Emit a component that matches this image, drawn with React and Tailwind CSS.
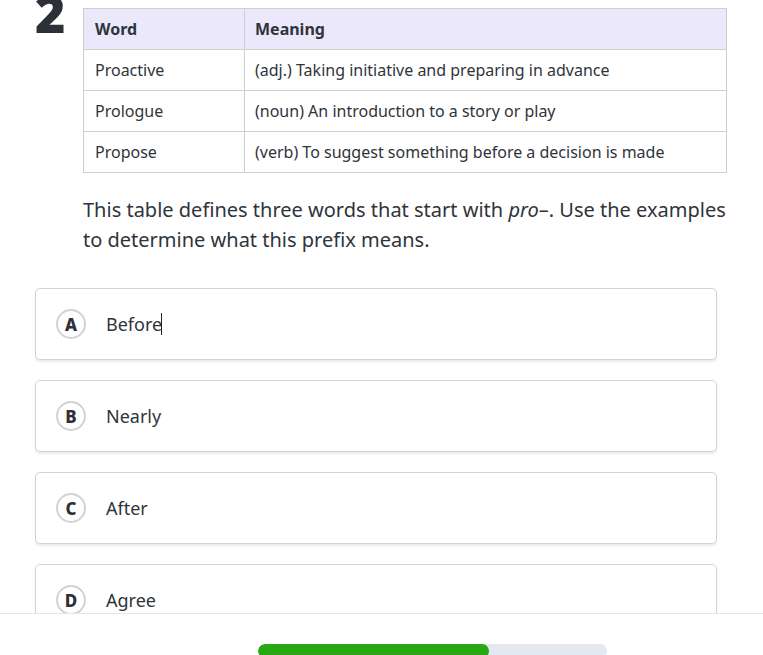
import React from "react";

const rows = [
  ["Proactive", "(adj.) Taking initiative and preparing in advance"],
  ["Prologue", "(noun) An introduction to a story or play"],
  ["Propose", "(verb) To suggest something before a decision is made"],
];

const options = [
  { letter: "A", text: "Before", caret: true },
  { letter: "B", text: "Nearly" },
  { letter: "C", text: "After" },
  { letter: "D", text: "Agree" },
];

const OptionCard = ({ letter, text, caret }) => (
  <div className="flex items-center h-[72px] border border-[#d4d4d4] rounded-[5px] bg-white shadow-[0_2px_2px_rgba(0,0,0,0.08)] pl-[20px]">
    <span className="flex items-center justify-center w-[30px] h-[30px] rounded-full border-2 border-[#d2d2d2] text-[17px] font-extrabold text-[#2b3136] pt-[2px]">
      {letter}
    </span>
    <span className="ml-[20px] text-[18px] text-[#2f343a] flex items-center">
      {text}
      {caret && <span className="inline-block w-px h-[22px] bg-[#222] ml-[-1px]" />}
    </span>
  </div>
);

export default function App() {
  return (
    <div
      className="relative h-[655px] w-[763px] overflow-hidden bg-white text-[#2f343a]"
      style={{ fontFamily: "'Noto Sans', sans-serif" }}
    >
      <div className="pl-[35px] w-[717px]">
        <div className="flex">
          <div className="w-[48px] shrink-0 mt-[-13px] text-[52px] leading-[52px] font-black text-[#2b3136]">
            2
          </div>
          <div className="pt-[8px] shrink-0">
            <table className="w-[644px] border-collapse text-[16px]">
              <thead>
                <tr className="bg-[#eae8fa] h-[41px]">
                  <th className="border border-[#cfcfcf] text-left font-bold pl-[11px] w-[161px]">Word</th>
                  <th className="border border-[#cfcfcf] text-left font-bold pl-[10px]">Meaning</th>
                </tr>
              </thead>
              <tbody>
                {rows.map(([w, m]) => (
                  <tr key={w} className="h-[41px]">
                    <td className="border border-[#cfcfcf] pl-[11px]">{w}</td>
                    <td className="border border-[#cfcfcf] pl-[10px]">{m}</td>
                  </tr>
                ))}
              </tbody>
            </table>
            <p className="mt-[22px] text-[20px] leading-[30px] w-[648px]">
              This table defines three words that start with <i>pro</i>–. Use the examples
              to determine what this prefix means.
            </p>
          </div>
        </div>
        <div className="mt-[33px] flex flex-col gap-[20px]">
          {options.map((o) => (
            <OptionCard key={o.letter} {...o} />
          ))}
        </div>
      </div>
      <div className="absolute left-0 right-0 bottom-0 h-[42px] bg-white border-t border-[#e3e6ec]">
        <div className="ml-[258px] mt-[30px] w-[349px] h-[14px] rounded-full bg-[#e4e8f0] overflow-hidden">
          <div className="h-full w-[231px] rounded-full bg-[#28a914]" />
        </div>
      </div>
    </div>
  );
}
